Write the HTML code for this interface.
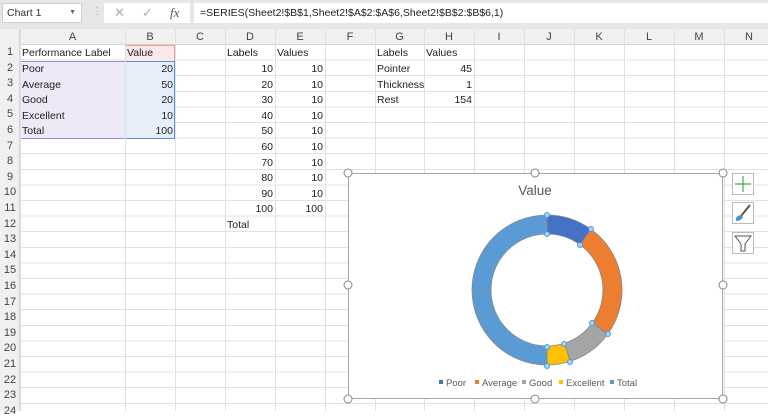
<!DOCTYPE html>
<html><head><meta charset="utf-8"><style>
*{margin:0;padding:0;box-sizing:border-box}
body{width:768px;height:411px;overflow:hidden;background:#fff;font-family:"Liberation Sans",sans-serif;font-size:10.5px;color:#222;position:relative}
.a{position:absolute}
.t{position:absolute;height:15px;line-height:16px;white-space:nowrap}
.r{text-align:right}
.vl{position:absolute;top:29px;bottom:0;width:1px;background:#e1e1e1}
.ch{position:absolute;top:29px;height:16px;line-height:16px;text-align:center;color:#444;font-size:11px}
.rh{position:absolute;left:0;width:20px;text-align:center;color:#444;font-size:11px;height:15.6px;line-height:15.6px}
</style></head><body>
<div class="a" style="left:0;top:0;width:768px;height:29px;background:#e6e6e6"></div>
<div class="a" style="left:2px;top:3px;width:80px;height:20px;background:#fff;border:1px solid #d0d0d0;padding-left:4px;line-height:18px;color:#333">Chart 1<span style="position:absolute;right:5px;font-size:7px;color:#666">▼</span></div>
<div class="a" style="left:92px;top:6px;color:#aaa;font-size:10px">⋮</div>
<div class="a" style="left:104px;top:3px;width:86px;height:20px;background:#fff;line-height:20px;color:#aaa;font-size:13px"><span style="position:absolute;left:10px">✕</span><span style="position:absolute;left:38px">✓</span><span style="position:absolute;left:66px;font-family:'Liberation Serif',serif;font-style:italic;color:#555">fx</span></div>
<div class="a" style="left:194px;top:3px;width:574px;height:20px;background:#fff;line-height:20px;padding-left:6px;color:#222">=SERIES(Sheet2!$B$1,Sheet2!$A$2:$A$6,Sheet2!$B$2:$B$6,1)</div>
<div class="a" style="left:0;top:29px;width:768px;height:16px;background:#f0f0f0;border-bottom:1px solid #d4d4d4"></div>
<div class="a" style="left:0;top:29px;width:20px;height:382px;background:#f0f0f0;border-right:1px solid #d4d4d4"></div>
<div class="a" style="left:20px;top:45px;width:748px;height:366px;background:repeating-linear-gradient(to bottom,transparent 0,transparent 14.6px,#e1e1e1 14.6px,#e1e1e1 15.6px)"></div>
<div class="a" style="left:20px;top:61px;width:105px;height:78px;background:#efe8f6;border:1px solid #a98ad0;border-right:none"></div>
<div class="a" style="left:125px;top:61px;width:50px;height:78px;background:#e6eefa;border:1.5px solid #5b8fd8"></div>
<div class="a" style="left:125px;top:45px;width:50px;height:16px;background:#fbe8e8;border:1px solid #e8a0a0;border-bottom:none"></div>
<div class="vl" style="left:20px"></div><div class="vl" style="left:125px"></div><div class="vl" style="left:175px"></div><div class="vl" style="left:225px"></div><div class="vl" style="left:275px"></div><div class="vl" style="left:325px"></div><div class="vl" style="left:375px"></div><div class="vl" style="left:424px"></div><div class="vl" style="left:474px"></div><div class="vl" style="left:524px"></div><div class="vl" style="left:574px"></div><div class="vl" style="left:624px"></div><div class="vl" style="left:674px"></div><div class="vl" style="left:724px"></div>
<div class="ch" style="left:20px;width:105px">A</div><div class="ch" style="left:125px;width:50px">B</div><div class="ch" style="left:175px;width:50px">C</div><div class="ch" style="left:225px;width:50px">D</div><div class="ch" style="left:275px;width:50px">E</div><div class="ch" style="left:325px;width:50px">F</div><div class="ch" style="left:375px;width:49px">G</div><div class="ch" style="left:424px;width:50px">H</div><div class="ch" style="left:474px;width:50px">I</div><div class="ch" style="left:524px;width:50px">J</div><div class="ch" style="left:574px;width:50px">K</div><div class="ch" style="left:624px;width:50px">L</div><div class="ch" style="left:674px;width:50px">M</div><div class="ch" style="left:724px;width:50px">N</div>
<div class="rh" style="top:45px">1</div><div class="rh" style="top:60.6px">2</div><div class="rh" style="top:76.2px">3</div><div class="rh" style="top:91.8px">4</div><div class="rh" style="top:107.4px">5</div><div class="rh" style="top:123px">6</div><div class="rh" style="top:138.6px">7</div><div class="rh" style="top:154.2px">8</div><div class="rh" style="top:169.8px">9</div><div class="rh" style="top:185.4px">10</div><div class="rh" style="top:201px">11</div><div class="rh" style="top:216.6px">12</div><div class="rh" style="top:232.2px">13</div><div class="rh" style="top:247.8px">14</div><div class="rh" style="top:263.4px">15</div><div class="rh" style="top:279px">16</div><div class="rh" style="top:294.6px">17</div><div class="rh" style="top:310.2px">18</div><div class="rh" style="top:325.8px">19</div><div class="rh" style="top:341.4px">20</div><div class="rh" style="top:357px">21</div><div class="rh" style="top:372.6px">22</div><div class="rh" style="top:388.2px">23</div><div class="rh" style="top:403.8px">24</div>
<div class="t" style="left:22px;top:45px">Performance Label</div><div class="t" style="left:127px;top:45px">Value</div>
<div class="t" style="left:22px;top:61px">Poor</div><div class="t" style="left:22px;top:76.6px">Average</div><div class="t" style="left:22px;top:92.2px">Good</div><div class="t" style="left:22px;top:107.8px">Excellent</div><div class="t" style="left:22px;top:123.4px">Total</div>
<div class="t r" style="left:125px;width:48px;top:61px">20</div><div class="t r" style="left:125px;width:48px;top:76.6px">50</div><div class="t r" style="left:125px;width:48px;top:92.2px">20</div><div class="t r" style="left:125px;width:48px;top:107.8px">10</div><div class="t r" style="left:125px;width:48px;top:123.4px">100</div>
<div class="t" style="left:227px;top:45px">Labels</div><div class="t" style="left:277px;top:45px">Values</div>
<div class="t r" style="left:225px;width:48px;top:61px">10</div><div class="t r" style="left:225px;width:48px;top:76.6px">20</div><div class="t r" style="left:225px;width:48px;top:92.2px">30</div><div class="t r" style="left:225px;width:48px;top:107.8px">40</div><div class="t r" style="left:225px;width:48px;top:123.4px">50</div><div class="t r" style="left:225px;width:48px;top:139px">60</div><div class="t r" style="left:225px;width:48px;top:154.6px">70</div><div class="t r" style="left:225px;width:48px;top:170.2px">80</div><div class="t r" style="left:225px;width:48px;top:185.8px">90</div><div class="t r" style="left:225px;width:48px;top:201.4px">100</div>
<div class="t r" style="left:275px;width:48px;top:61px">10</div><div class="t r" style="left:275px;width:48px;top:76.6px">10</div><div class="t r" style="left:275px;width:48px;top:92.2px">10</div><div class="t r" style="left:275px;width:48px;top:107.8px">10</div><div class="t r" style="left:275px;width:48px;top:123.4px">10</div><div class="t r" style="left:275px;width:48px;top:139px">10</div><div class="t r" style="left:275px;width:48px;top:154.6px">10</div><div class="t r" style="left:275px;width:48px;top:170.2px">10</div><div class="t r" style="left:275px;width:48px;top:185.8px">10</div><div class="t r" style="left:275px;width:48px;top:201.4px">100</div>
<div class="t" style="left:227px;top:217px">Total</div>
<div class="t" style="left:377px;top:45px">Labels</div><div class="t" style="left:426px;top:45px">Values</div>
<div class="t" style="left:377px;top:61px">Pointer</div><div class="t" style="left:377px;top:76.6px">Thickness</div><div class="t" style="left:377px;top:92.2px">Rest</div>
<div class="t r" style="left:424px;width:48px;top:61px">45</div><div class="t r" style="left:424px;width:48px;top:76.6px">1</div><div class="t r" style="left:424px;width:48px;top:92.2px">154</div>
<div class="a" style="left:348px;top:173px;width:375px;height:226px;background:#fff;border:1px solid #a6a6a6"></div>
<svg class="a" style="left:0;top:0" width="768" height="411">
<g stroke="#888" stroke-width="0.8">
<path d="M547,215 A75,75 0 0 1 591.1,229.3 L579.9,244.7 A56,56 0 0 0 547,234 Z" fill="#4472C4"/>
<path d="M591.1,229.3 A75,75 0 0 1 607.7,334.1 L592.3,322.9 A56,56 0 0 0 579.9,244.7 Z" fill="#ED7D31"/>
<path d="M607.7,334.1 A75,75 0 0 1 570.2,361.3 L564.3,343.3 A56,56 0 0 0 592.3,322.9 Z" fill="#A5A5A5"/>
<path d="M570.2,361.3 A75,75 0 0 1 547,365 L547,346 A56,56 0 0 0 564.3,343.3 Z" fill="#FFC000"/>
<path d="M547,365 A75,75 0 0 1 547,215 L547,234 A56,56 0 0 0 547,346 Z" fill="#5B9BD5"/>
</g>
<g fill="#a9d0f5" stroke="#4a9ae0" stroke-width="1">
<circle cx="547" cy="215" r="2.5"/><circle cx="547" cy="234" r="2.5"/><circle cx="591" cy="229" r="2.5"/><circle cx="580" cy="245" r="2.5"/><circle cx="608" cy="334" r="2.5"/><circle cx="592" cy="323" r="2.5"/><circle cx="570" cy="362" r="2.5"/><circle cx="564" cy="344" r="2.5"/><circle cx="547" cy="366" r="2.5"/><circle cx="547" cy="347" r="2.5"/>
</g>
<g fill="#fff" stroke="#888" stroke-width="1">
<circle cx="348" cy="173" r="4"/><circle cx="535" cy="173" r="4"/><circle cx="723" cy="173" r="4"/><circle cx="348" cy="285" r="4"/><circle cx="723" cy="285" r="4"/><circle cx="348" cy="399" r="4"/><circle cx="535" cy="399" r="4"/><circle cx="723" cy="399" r="4"/>
</g>
<g font-family="Liberation Sans, sans-serif" font-size="9.5" fill="#595959">
<text x="535" y="195" font-size="13.5" text-anchor="middle">Value</text>
<rect x="439" y="380" width="4" height="4" fill="#4472C4"/><text x="446" y="386">Poor</text>
<rect x="475" y="380" width="4" height="4" fill="#ED7D31"/><text x="482" y="386">Average</text>
<rect x="522" y="380" width="4" height="4" fill="#A5A5A5"/><text x="529" y="386">Good</text>
<rect x="559" y="380" width="4" height="4" fill="#FFC000"/><text x="566" y="386">Excellent</text>
<rect x="610" y="380" width="4" height="4" fill="#5B9BD5"/><text x="617" y="386">Total</text>
</g>
<g fill="#fff" stroke="#bbb">
<rect x="732.5" y="173.5" width="21" height="21"/><rect x="732.5" y="202.5" width="21" height="21"/><rect x="732.5" y="232.5" width="21" height="21"/>
</g>
<path d="M743,176 V192 M735,184 H751" stroke="#3cb05a" stroke-width="1.2"/>
<path d="M750,205 L741,216" stroke="#555" stroke-width="2"/>
<path d="M741,215 Q735,216 736,221 Q741,221 743,217 Z" fill="#4a90d9"/>
<path d="M735,236 H751 L745,244 V251 H741 V244 Z" fill="#fff" stroke="#555" stroke-width="1"/>
</svg>
</body></html>
